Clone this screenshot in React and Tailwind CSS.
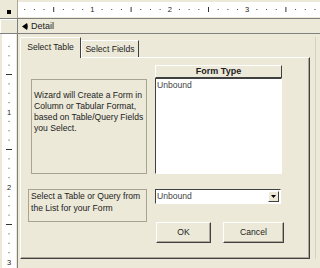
import React from 'react';

const INCH_X = 77.4;
const ORIGIN_X = 15;
const INCH_Y = 75;
const ORIGIN_Y = 37;

function HorizontalRuler() {
  const marks = [];
  for (let i = 1; i < 40; i++) {
    const x = ORIGIN_X + (i * INCH_X) / 8 - 18;
    if (x > 304) break;
    if (i % 8 === 0) {
      marks.push(
        <text key={i} x={x} y={10} fontSize="7.5" textAnchor="middle" fill="#222" fontFamily="Liberation Sans, sans-serif">
          {i / 8}
        </text>
      );
    } else if (i % 4 === 0) {
      marks.push(<line key={i} x1={x} x2={x} y1={5} y2={10} stroke="#333" strokeWidth="1" />);
    } else {
      marks.push(<rect key={i} x={x - 0.5} y={7} width={1} height={1} fill="#444" />);
    }
  }
  return (
    <svg width="302" height="15" className="block">
      {marks}
    </svg>
  );
}

function VerticalRuler() {
  const marks = [];
  for (let i = 1; i < 40; i++) {
    const y = ORIGIN_Y + (i * INCH_Y) / 8 - 34;
    if (y > 240) break;
    if (i % 8 === 0) {
      marks.push(
        <text key={i} x={7} y={y + 3} fontSize="7.5" textAnchor="middle" fill="#222" fontFamily="Liberation Sans, sans-serif">
          {i / 8}
        </text>
      );
    } else if (i % 4 === 0) {
      marks.push(<line key={i} x1={4} x2={10} y1={y} y2={y} stroke="#333" strokeWidth="1" />);
    } else {
      marks.push(<rect key={i} x={6.5} y={y - 0.5} width={1} height={1} fill="#444" />);
    }
  }
  return (
    <svg width="14" height="234" className="block">
      {marks}
    </svg>
  );
}

function Button({ children, className }) {
  return (
    <div
      className={
        'flex h-[21px] items-center justify-center border border-t-white border-l-white border-r-[#404040] border-b-[#404040] bg-[#ece9d8] shadow-[inset_-1px_-1px_0_#aca899] ' +
        className
      }
    >
      {children}
    </div>
  );
}

export default function App() {
  return (
    <div className="flex h-[268px] w-[320px] flex-col overflow-hidden bg-[#ece9d8] font-['Liberation_Sans',Arial,sans-serif] text-[8.6px] text-[#222]">
      {/* ruler row */}
      <div className="flex h-[19px] border-b border-[#808080]">
        <div className="flex w-[18px] items-start justify-center border-r border-[#aca899] pt-[10px]">
          <div className="h-[4px] w-[4px] bg-black" />
        </div>
        <div className="mt-[2px] h-[15px] flex-1 bg-white">
          <HorizontalRuler />
        </div>
      </div>

      {/* detail bar */}
      <div className="flex h-[15px]">
        <div className="w-[18px] border-r border-b border-[#808080] bg-[#ece9d8] shadow-[inset_1px_1px_0_#fff]" />
        <div className="flex flex-1 items-center border-b border-[#808080] pl-[4px]">
          <svg width="6" height="7" viewBox="0 0 6 7" className="mr-[3px]">
            <path d="M5 0 L0 3.5 L5 7 Q6.5 3.5 5 0 Z" fill="#000" />
          </svg>
          <span className="text-[9px] leading-none">Detail</span>
        </div>
      </div>

      {/* body */}
      <div className="flex flex-1">
        <div className="w-[18px] border-r border-[#808080] pl-[2px]">
          <div className="h-full w-[14px] bg-white">
            <VerticalRuler />
          </div>
        </div>

        <div className="flex-1 border-r-[3px] border-r-[#ece9d8] pl-[2px] pt-[3px]">
          <div className="w-[296px] border-r border-[#d6d2c2] pr-[3px]">
            {/* tabs */}
            <div className="flex h-[20px] items-end">
              <div className="relative z-10 -mb-px flex h-[21px] w-[61px] items-center justify-center border border-b-0 border-t-white border-l-white border-r-[#404040] bg-[#ece9d8] pb-[2px]">
                Select Table
              </div>
              <div className="flex h-[17px] w-[58px] items-center justify-center border border-b-0 border-t-white border-l-white border-r-[#404040] bg-[#ece9d8] pt-[1px]">
                Select Fields
              </div>
            </div>

            {/* panel */}
            <div className="h-[202px] w-[290px] border border-t-white border-l-white border-r-[#404040] border-b-[#404040] shadow-[inset_-1px_-1px_0_#aca899]">
              <div className="flex items-start pt-[7px]">
                <div className="ml-[10px] mt-[14px] h-[95px] w-[116px] border border-[#a7a493] px-[2px] pt-[10px] leading-[10.9px]">
                  Wizard will Create a Form in Column or Tabular Format, based on Table/Query Fields you Select.
                </div>
                <div className="ml-[8px] w-[127px]">
                  <div className="flex h-[13px] items-center justify-center border border-t-white border-l-white border-r-[#404040] border-b-[#404040] text-[9px] font-bold">
                    Form Type
                  </div>
                  <div className="h-[96px] border border-t-[#404040] border-l-[#404040] border-r-white border-b-white bg-white px-[1px] pt-[1px] leading-[11px] text-[#444]">
                    Unbound
                  </div>
                </div>
              </div>

              <div className="mt-[15px] flex items-start">
                <div className="ml-[7px] h-[33px] w-[119px] border border-[#a7a493] px-[2px] pt-[1px] leading-[11.6px]">
                  Select a Table or Query from the List for your Form
                </div>
                <div className="ml-[8px] w-[130px]">
                  <div className="flex h-[15px] w-[126px] items-center border border-t-[#404040] border-l-[#404040] border-r-white border-b-white bg-white pl-[1px] text-[#444]">
                    <span className="flex-1">Unbound</span>
                    <div className="mr-[1px] flex h-[11px] w-[11px] items-center justify-center border border-t-white border-l-white border-r-[#404040] border-b-[#404040] bg-[#ece9d8]">
                      <svg width="5" height="3" viewBox="0 0 5 3">
                        <path d="M0 0 H5 L2.5 3 Z" fill="#000" />
                      </svg>
                    </div>
                  </div>
                  <div className="mt-[18px] flex">
                    <Button className="ml-[1px] w-[55px]">OK</Button>
                    <Button className="ml-[12px] w-[61px]">Cancel</Button>
                  </div>
                </div>
              </div>
            </div>
          </div>
        </div>
      </div>
    </div>
  );
}
